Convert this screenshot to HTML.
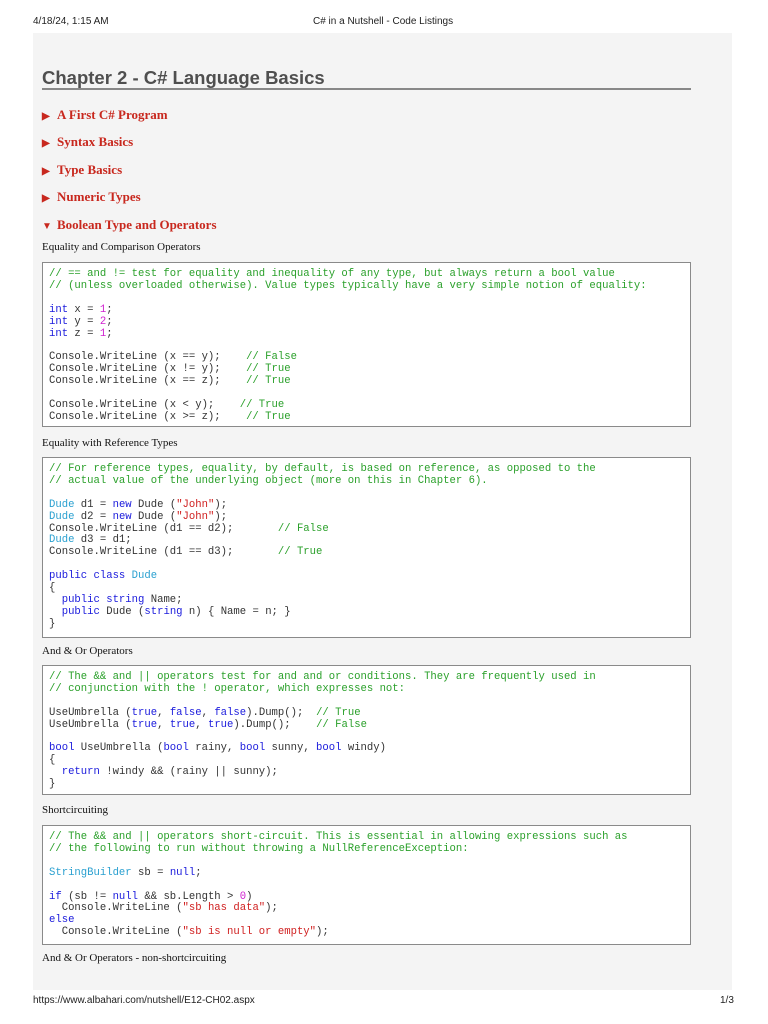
<!DOCTYPE html>
<html><head><meta charset="utf-8"><style>
body{margin:0;width:768px;height:1024px;background:#fff;position:relative;overflow:hidden;font-family:"Liberation Serif",serif;}
.hdr{position:absolute;top:16px;font:10px "Liberation Sans",sans-serif;color:#222;}
.page{position:absolute;left:33px;top:33px;width:699px;height:957px;background:#f4f4f4;}
h1{position:absolute;left:42px;top:65px;margin:0;width:649px;font:bold 18.5px "Liberation Sans",sans-serif;color:#4f4f4f;border-bottom:2px solid #888;height:23px;line-height:26px;}
.h{position:absolute;left:42px;font-weight:bold;font-size:13px;color:#c8281e;}
.h span{display:inline-block;width:15px;font-size:10px;}
.l{position:absolute;left:42px;font-size:11px;color:#111;}
pre{position:absolute;left:42px;width:635px;margin:0;padding:6px 6px 2px;background:#fff;border:1px solid #8a8a8a;font:10.6px/11.9px "Liberation Mono",monospace;color:#333;}
.c{color:#2aa02a}.k{color:#1a1adc}.n{color:#d020d0}.t{color:#2aa0d0}.s{color:#d02020}
</style></head><body>
<div class="hdr" style="left:33px">4/18/24, 1:15 AM</div>
<div class="hdr" style="left:313px">C# in a Nutshell - Code Listings</div>
<div class="page"></div>
<h1>Chapter 2 - C# Language Basics</h1>
<div class="h" style="top:107px"><span>▶</span>A First C# Program</div>
<div class="h" style="top:134px"><span>▶</span>Syntax Basics</div>
<div class="h" style="top:162px"><span>▶</span>Type Basics</div>
<div class="h" style="top:189px"><span>▶</span>Numeric Types</div>
<div class="h" style="top:217px"><span>▼</span>Boolean Type and Operators</div>
<div class="l" style="top:241px">Equality and Comparison Operators</div>
<pre style="top:262px;height:155px"><span class="c">// == and != test for equality and inequality of any type, but always return a bool value
// (unless overloaded otherwise). Value types typically have a very simple notion of equality:</span>

<span class="k">int</span> x = <span class="n">1</span>;
<span class="k">int</span> y = <span class="n">2</span>;
<span class="k">int</span> z = <span class="n">1</span>;

Console.WriteLine (x == y);    <span class="c">// False</span>
Console.WriteLine (x != y);    <span class="c">// True</span>
Console.WriteLine (x == z);    <span class="c">// True</span>

Console.WriteLine (x &lt; y);    <span class="c">// True</span>
Console.WriteLine (x &gt;= z);    <span class="c">// True</span></pre>
<div class="l" style="top:437px">Equality with Reference Types</div>
<pre style="top:457px;height:171px"><span class="c">// For reference types, equality, by default, is based on reference, as opposed to the
// actual value of the underlying object (more on this in Chapter 6).</span>

<span class="t">Dude</span> d1 = <span class="k">new</span> Dude (<span class="s">"John"</span>);
<span class="t">Dude</span> d2 = <span class="k">new</span> Dude (<span class="s">"John"</span>);
Console.WriteLine (d1 == d2);       <span class="c">// False</span>
<span class="t">Dude</span> d3 = d1;
Console.WriteLine (d1 == d3);       <span class="c">// True</span>

<span class="k">public class</span> <span class="t">Dude</span>
{
  <span class="k">public string</span> Name;
  <span class="k">public</span> Dude (<span class="k">string</span> n) { Name = n; }
}</pre>
<div class="l" style="top:645px">And &amp; Or Operators</div>
<pre style="top:665px;height:120px"><span class="c">// The &amp;&amp; and || operators test for and and or conditions. They are frequently used in
// conjunction with the ! operator, which expresses not:</span>

UseUmbrella (<span class="k">true</span>, <span class="k">false</span>, <span class="k">false</span>).Dump();  <span class="c">// True</span>
UseUmbrella (<span class="k">true</span>, <span class="k">true</span>, <span class="k">true</span>).Dump();    <span class="c">// False</span>

<span class="k">bool</span> UseUmbrella (<span class="k">bool</span> rainy, <span class="k">bool</span> sunny, <span class="k">bool</span> windy)
{
  <span class="k">return</span> !windy &amp;&amp; (rainy || sunny);
}</pre>
<div class="l" style="top:804px">Shortcircuiting</div>
<pre style="top:825px;height:110px"><span class="c">// The &amp;&amp; and || operators short-circuit. This is essential in allowing expressions such as
// the following to run without throwing a NullReferenceException:</span>

<span class="t">StringBuilder</span> sb = <span class="k">null</span>;

<span class="k">if</span> (sb != <span class="k">null</span> &amp;&amp; sb.Length &gt; <span class="n">0</span>)
  Console.WriteLine (<span class="s">"sb has data"</span>);
<span class="k">else</span>
  Console.WriteLine (<span class="s">"sb is null or empty"</span>);</pre>
<div class="l" style="top:952px">And &amp; Or Operators - non-shortcircuiting</div>
<div class="hdr" style="left:33px;top:995px">https://www.albahari.com/nutshell/E12-CH02.aspx</div>
<div class="hdr" style="left:720px;top:995px">1/3</div>
</body></html>
